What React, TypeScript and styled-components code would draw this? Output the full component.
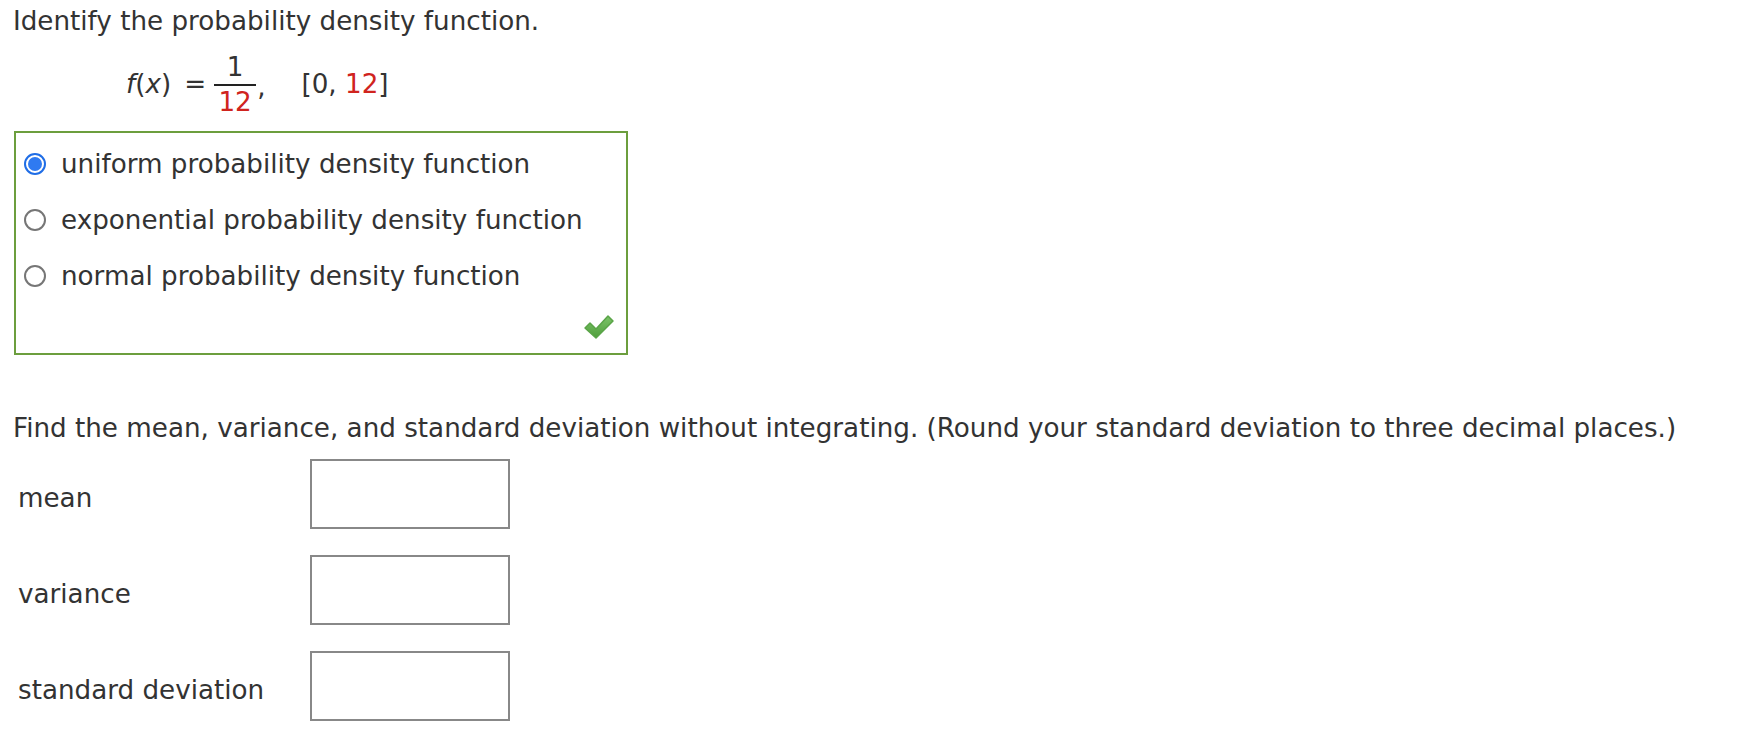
import React from "react";
import styled, { createGlobalStyle } from "styled-components";

const Global = createGlobalStyle`
  html, body { margin: 0; padding: 0; background: #fff; }
  body { font-family: "DejaVu Sans", Verdana, sans-serif; color: #333; }
`;

const Page = styled.div`
  padding: 6px 0 0 13px;
  font-size: 26.2px;
  color: #333;
`;

const Title = styled.div`
  line-height: 30px;
`;

const FormulaRow = styled.div`
  display: flex;
  align-items: center;
  margin: 15px 0 0 113px;
  height: 66px;
`;

const Italic = styled.span`
  font-style: italic;
`;

const Eq = styled.span`
  margin: 0 8px 0 13px;
`;

const Fraction = styled.span`
  display: inline-flex;
  flex-direction: column;
  align-items: center;
  line-height: 30px;
`;

const FracLine = styled.span`
  display: block;
  width: 42px;
  height: 2px;
  background: #222;
  margin: 2px 0 1px;
`;

const Red = styled.span`
  color: #d0241e;
`;

const Comma = styled.span`
  margin-left: 1px;
  padding-top: 6px;
`;

const Interval = styled.span`
  margin-left: 36px;
`;

const ChoiceBox = styled.div`
  position: relative;
  box-sizing: border-box;
  width: 614px;
  height: 224px;
  margin: 14px 0 0 1px;
  border: 2px solid #6c9e3e;
  padding-top: 3px;
`;

const Option = styled.label`
  display: flex;
  align-items: center;
  height: 56px;
  padding-left: 8px;
  line-height: 30px;
`;

const Radio = styled.span<{ $checked?: boolean }>`
  box-sizing: border-box;
  width: 22px;
  height: 22px;
  border-radius: 50%;
  border: 2px solid ${(p) => (p.$checked ? "#1f6de6" : "#767676")};
  margin-right: 15px;
  display: inline-flex;
  align-items: center;
  justify-content: center;
  flex-shrink: 0;
  &::after {
    content: "";
    display: ${(p) => (p.$checked ? "block" : "none")};
    width: 14px;
    height: 14px;
    border-radius: 50%;
    background: #2f7af1;
  }
`;

const Check = styled.svg`
  position: absolute;
  right: 11px;
  bottom: 13px;
`;

const Prompt = styled.div`
  margin-top: 58px;
  line-height: 30px;
`;

const AnswerGrid = styled.div`
  display: grid;
  grid-template-columns: 297px 200px;
  row-gap: 26px;
  margin-top: 16px;
  align-items: center;
`;

const Label = styled.div`
  padding-left: 5px;
  padding-top: 8px;
`;

const Input = styled.div`
  box-sizing: border-box;
  width: 200px;
  height: 70px;
  border: 2px solid #888;
`;

const options = [
  { text: "uniform probability density function", checked: true },
  { text: "exponential probability density function", checked: false },
  { text: "normal probability density function", checked: false },
];

const fields = ["mean", "variance", "standard deviation"];

export default function App() {
  return (
    <>
      <Global />
      <Page>
        <Title>Identify the probability density function.</Title>
        <FormulaRow>
          <span>
            <Italic>f</Italic>(<Italic>x</Italic>)
          </span>
          <Eq>=</Eq>
          <Fraction>
            <span>1</span>
            <FracLine />
            <Red>12</Red>
          </Fraction>
          <Comma>,</Comma>
          <Interval>
            [0, <Red>12</Red>]
          </Interval>
        </FormulaRow>
        <ChoiceBox>
          {options.map((o) => (
            <Option key={o.text}>
              <Radio $checked={o.checked} />
              {o.text}
            </Option>
          ))}
          <Check width="32" height="27" viewBox="0 0 32 27">
            <defs>
              <linearGradient id="chk" x1="0" y1="0" x2="0" y2="1">
                <stop offset="0" stopColor="#7cc468" />
                <stop offset="1" stopColor="#4f9e3c" />
              </linearGradient>
            </defs>
            <path
              d="M2 15 L7 10 L13 16 L25 3 L30 8 L13 25 Z"
              fill="url(#chk)"
              stroke="#5aa448"
              strokeWidth="1.5"
              strokeLinejoin="round"
            />
          </Check>
        </ChoiceBox>
        <Prompt>
          Find the mean, variance, and standard deviation without integrating. (Round your standard deviation to three decimal places.)
        </Prompt>
        <AnswerGrid>
          {fields.map((f) => (
            <React.Fragment key={f}>
              <Label>{f}</Label>
              <Input />
            </React.Fragment>
          ))}
        </AnswerGrid>
      </Page>
    </>
  );
}
